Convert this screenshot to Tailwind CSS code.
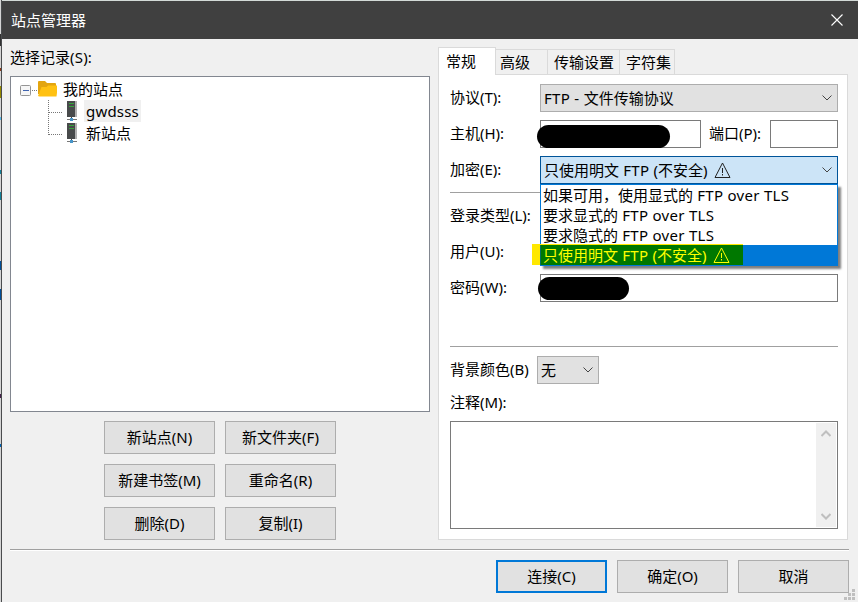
<!DOCTYPE html>
<html lang="zh-CN">
<head>
  <meta charset="UTF-8" />
  <meta name="viewport" content="width=device-width, initial-scale=1" />
  <title>站点管理器</title>
  <script src="https://cdn.jsdelivr.net/npm/@tailwindcss/browser@4"></script>
</head>
<body class="w-[858px] h-[602px] overflow-hidden flex bg-[#d4d4d4] font-['Noto_Sans','Noto_Sans_CJK_SC',sans-serif] text-[15px] leading-[20px] text-black whitespace-nowrap">
  <!-- Sliver of the window behind -->
  <div class="w-px shrink-0 relative">
    <i class="absolute top-[34px] w-px h-3 bg-[#333]"></i>
    <i class="absolute top-[68px] w-px h-[3px] bg-[#8a3a1a]"></i>
    <i class="absolute top-[86px] w-px h-3 bg-[#958900]"></i>
    <i class="absolute top-[117px] w-px h-[3px] bg-[#58b8e8]"></i>
    <i class="absolute top-[170px] w-px h-1 bg-[#12829a]"></i>
    <i class="absolute top-[192px] w-px h-2 bg-[#12829a]"></i>
    <i class="absolute top-[261px] w-px h-[9px] bg-[#004f9a]"></i>
    <i class="absolute top-[289px] w-px h-[11px] bg-[#004f9a]"></i>
    <i class="absolute top-[394px] w-px h-[4px] bg-[#42204a]"></i>
    <i class="absolute top-[444px] w-px h-[3px] bg-[#0064b4]"></i>
  </div>
  <div class="flex-1 min-w-0 flex flex-col border-l border-[#4a4c4e] bg-[#f0f0f0]">
    <!-- Title bar -->
    <header class="h-[39px] shrink-0 border-t border-[#d3dad7] bg-[#404040] text-white flex items-center justify-between pl-[9px] pr-[15px]">
      <span>站点管理器</span>
      <svg class="w-3 h-3" viewBox="0 0 12 12" fill="none" stroke="#fff" stroke-width="1.1"><path d="M.5.5l11 11M11.5.5l-11 11"/></svg>
    </header>

    <main class="flex h-[510px] shrink-0 pl-2">
      <!-- Left: site tree -->
      <section class="w-[420px] shrink-0 flex flex-col">
        <div class="h-[37px] flex items-center pb-[2px]"><span>选择记录<span class="tracking-[0.2px]">(S):</span></span></div>
        <div class="h-[336px] border border-[#828790] bg-white pt-px pl-[9px]">
          <div class="flex items-center h-[22px]">
            <svg class="w-[37px] h-[22px]" viewBox="0 0 37 22" fill="none">
              <rect x=".5" y="7.5" width="10" height="10" rx="1" fill="#f6f6f6" stroke="#959595"/>
              <path d="M3 12.5h6" stroke="#4064b0"/>
              <path d="M12 12.5h6" stroke="#777" stroke-dasharray="1 1"/>
              <path d="M18 4q0-1 1-1h6l2 2h8q1 0 1 1v10H18z" fill="#e3a50f"/>
              <path d="M18 18l3.500-9 5 0 1.500-1.500h10l-1.500 11H19.500q-1.500 0-1.500-1.500z" fill="#ffc112"/>
            </svg>
            <span class="ml-[6px]">我的站点</span>
          </div>
          <div class="flex items-center h-[22px]">
            <svg class="w-[64px] h-[22px]" viewBox="0 0 64 22" fill="none">
              <path d="M28.500 0v22M29 12.500h13" stroke="#777" stroke-dasharray="1 1"/>
              <rect x="47" y="1" width="8" height="16" fill="#484a4b"/>
              <rect x="55" y="1" width="2" height="16" fill="#b0b0b0"/>
              <path d="M49 3.500h5M49 6.500h5" stroke="#36a33b"/>
              <path d="M51.500 17v2" stroke="#444"/>
              <path d="M47 19.500h10" stroke="#777"/>
              <rect x="50" y="18" width="3" height="3" fill="#4694c8"/>
            </svg>
            <span class="h-[22px] w-[57px] pl-[2px] pt-px bg-[#f0f0f0] tracking-[0.2px]">gwdsss</span>
          </div>
          <div class="flex items-center h-[22px]">
            <svg class="w-[64px] h-[22px]" viewBox="0 0 64 22" fill="none">
              <path d="M28.500 0v13M29 12.500h13" stroke="#777" stroke-dasharray="1 1"/>
              <rect x="47" y="1" width="8" height="16" fill="#484a4b"/>
              <rect x="55" y="1" width="2" height="16" fill="#b0b0b0"/>
              <path d="M49 3.500h5M49 6.500h5" stroke="#36a33b"/>
              <path d="M51.500 17v2" stroke="#444"/>
              <path d="M47 19.500h10" stroke="#777"/>
              <rect x="50" y="18" width="3" height="3" fill="#4694c8"/>
            </svg>
            <span class="pl-[2px]">新站点</span>
          </div>
        </div>
        <div class="grid grid-cols-[111px_111px] auto-rows-[33px] gap-[10px] justify-center pt-[9px]">
          <button class="border border-[#adadad] bg-[#e1e1e1] pb-[2px]">新站点(N)</button>
          <button class="border border-[#adadad] bg-[#e1e1e1] pb-[2px]">新文件夹(F)</button>
          <button class="border border-[#adadad] bg-[#e1e1e1] pb-[2px]">新建书签(M)</button>
          <button class="border border-[#adadad] bg-[#e1e1e1] pb-[2px]">重命名(R)</button>
          <button class="border border-[#adadad] bg-[#e1e1e1] pb-[2px]">删除(D)</button>
          <button class="border border-[#adadad] bg-[#e1e1e1] pb-[2px]">复制(I)</button>
        </div>
      </section>

      <!-- Right: tabs and settings -->
      <section class="ml-2 w-[410px] shrink-0 flex flex-col pt-2">
        <div class="flex items-end h-[28px] relative z-10 -mb-px">
          <div class="w-[58px] h-[28px] border border-b-0 border-[#dadada] bg-white pl-[7px] pt-[3px]">常规</div>
          <div class="w-[52px] h-[26px] border border-l-0 border-[#dadada] pl-[4px] pt-[2px]">高级</div>
          <div class="w-[72px] h-[26px] border border-l-0 border-[#dadada] pl-[6px] pt-[2px]">传输设置</div>
          <div class="w-[55px] h-[26px] border border-l-0 border-[#dadada] pl-[6px] pt-[2px]">字符集</div>
        </div>
        <div class="h-[466px] border border-[#dadada] bg-white pl-[11px] pr-[9px] pt-[9px]">
          <div class="flex items-center h-[28px] mb-2">
            <label class="w-[90px] pb-[2px]">协议(T):</label>
            <div class="flex-1 h-full border border-[#adadad] bg-[#e1e1e1] flex items-center justify-between pl-[3px] pr-[5px]">
              <span><span class="tracking-[0.3px]">FTP - </span>文件传输协议</span>
              <svg class="w-[10px] h-[6px]" viewBox="0 0 10 6" fill="none" stroke="#444"><path d="M.5.5L5 5 9.500.5"/></svg>
            </div>
          </div>
          <div class="flex items-center h-[28px] mb-2">
            <label class="w-[90px] pb-[2px]">主机(H):</label>
            <div class="relative w-[161px] h-full border border-[#7a7a7a]">
              <div class="absolute -left-[4px] top-[4px] w-[133px] h-[23px] rounded-full bg-black"></div>
            </div>
            <label class="ml-2 w-[61px] pb-[2px]">端口(P):</label>
            <div class="flex-1 h-full border border-[#7a7a7a]"></div>
          </div>
          <div class="flex items-center h-[28px] mb-2">
            <label class="w-[90px] pb-[2px]">加密(E):</label>
            <div class="relative flex-1 h-full border border-[#005499] bg-[#cce4f7] flex items-center justify-between pl-[3px] pr-[5px]">
              <span class="flex items-center"><span>只使用明文<span class="tracking-[0.3px]"> FTP </span>(不安全)</span><svg class="ml-[6px] w-[17px] h-[16px]" viewBox="0 0 17 16" fill="none" stroke="#222"><path d="M8.500 1L16 15.500H1zM8.500 6v5M8.500 12v1.500"/></svg></span>
              <svg class="w-[10px] h-[6px]" viewBox="0 0 10 6" fill="none" stroke="#444"><path d="M.5.5L5 5 9.500.5"/></svg>
              <!-- Open list -->
              <div class="absolute z-20 -left-px top-[27px] w-[298px] h-[82px] border border-[#0078d7] bg-white pl-[2px] shadow-[3px_3px_2px_rgba(0,0,0,0.5)]">
                <div class="h-5">如果可用，使用显式的<span class="tracking-[0.3px]"> FTP over TLS</span></div>
                <div class="h-5">要求显式的<span class="tracking-[0.3px]"> FTP over TLS</span></div>
                <div class="h-5">要求隐式的<span class="tracking-[0.3px]"> FTP over TLS</span></div>
                <div class="h-5 -ml-[2px] bg-[#0078d7] relative">
                  <div class="absolute -left-[9px] -top-px w-[211px] h-[21px] bg-[#ffe800]"></div>
                  <div class="absolute -left-px top-0 w-[203px] h-5 bg-[#007800] border-l border-[#007060]"></div>
                  <span class="relative pl-[2px] flex items-center text-[#ffff00]"><span>只使用明文<span class="tracking-[0.3px]"> FTP </span>(不安全)</span><svg class="ml-[6px] w-[17px] h-[16px]" viewBox="0 0 17 16" fill="none" stroke="#ffff00"><path d="M8.500 1L16 15.500H1zM8.500 6v5M8.500 12v1.500"/></svg></span>
                </div>
              </div>
            </div>
          </div>
          <div class="h-px bg-[#a0a0a0]"></div>
          <div class="flex items-center h-[28px] mt-[9px] mb-2"><label class="pb-[2px]">登录类型(L):</label></div>
          <div class="flex items-center h-[28px] mb-2"><label class="pb-[2px]">用户(U):</label></div>
          <div class="flex items-center h-[28px]">
            <label class="w-[90px] pb-[2px]">密码(W):</label>
            <div class="relative flex-1 h-full border border-[#7a7a7a]">
              <div class="absolute -left-[3px] top-[2px] w-[91px] h-[23px] rounded-full bg-black"></div>
            </div>
          </div>
          <div class="h-px bg-[#a0a0a0] mt-[44px]"></div>
          <div class="flex items-center h-[28px] mt-[9px]">
            <label class="w-[87px] pb-[2px]">背景颜色(B)</label>
            <div class="w-[62px] h-full border border-[#adadad] bg-[#e1e1e1] flex items-center justify-between pl-[3px] pr-[5px]">
              <span>无</span>
              <svg class="w-[10px] h-[6px]" viewBox="0 0 10 6" fill="none" stroke="#444"><path d="M.5.5L5 5 9.500.5"/></svg>
            </div>
          </div>
          <div class="h-[37px] flex items-center"><label class="pb-[2px]">注释(M):</label></div>
          <div class="h-[108px] border border-[#7a7a7a] flex justify-end p-px">
            <div class="w-5 bg-[#f0f0f0] flex flex-col items-center justify-between py-[7px]">
              <svg class="w-[10px] h-[7px]" viewBox="0 0 10 7" fill="none" stroke="#bfbfbf" stroke-width="2"><path d="M.5 6L5 1.500 9.500 6"/></svg>
              <svg class="w-[10px] h-[7px]" viewBox="0 0 10 7" fill="none" stroke="#bfbfbf" stroke-width="2"><path d="M.5 1L5 5.500 9.500 1"/></svg>
            </div>
          </div>
        </div>
      </section>
    </main>

    <!-- Footer -->
    <footer class="relative flex-1 ml-2 mr-[9px]">
      <div class="h-[2px] bg-[#a0a0a0] border-b border-white"></div>
      <div class="flex justify-end gap-[10px] pt-[9px]">
        <button class="w-[111px] h-[33px] border-2 border-[#0078d7] bg-[#e1e1e1] pb-[2px]">连接(C)</button>
        <button class="w-[111px] h-[33px] border border-[#adadad] bg-[#e1e1e1] pb-[2px]">确定(O)</button>
        <button class="w-[111px] h-[33px] border border-[#adadad] bg-[#e1e1e1] pb-[2px]">取消</button>
      </div>
      <!-- Resize grip -->
      <svg class="absolute -right-[6px] bottom-[2px] w-[11px] h-[11px]" viewBox="0 0 11 11" fill="#bfbfbf"><path d="M8 0h3v3H8zM8 4h3v3H8zM4 4h3v3H4zM8 8h3v3H8zM4 8h3v3H4zM0 8h3v3H0z"/></svg>
    </footer>
  </div>
</body>
</html>
